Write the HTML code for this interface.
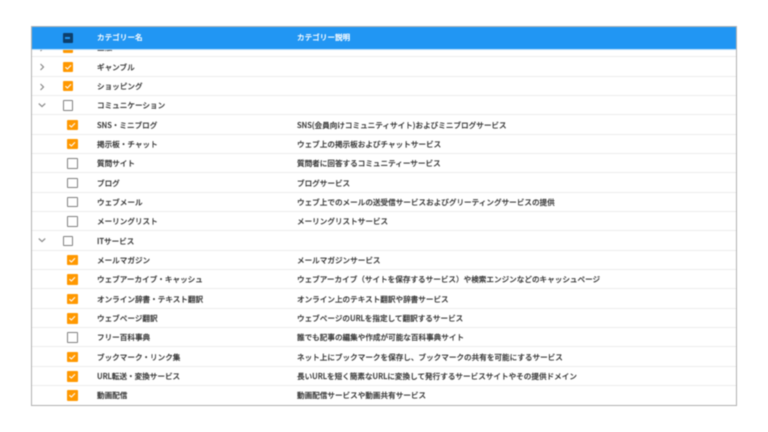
<!DOCTYPE html>
<html lang="ja"><head><meta charset="utf-8">
<style>
html,body{margin:0;padding:0;background:#fff;width:768px;height:432px;overflow:hidden}
body{font-family:"Noto Sans CJK JP","Liberation Sans",sans-serif;color:#333;font-size:7.6px;font-weight:500}
#t{position:absolute;left:31px;top:26px;width:704px;height:378px;border:1px solid #b0b0b0;overflow:hidden;background:#fff;filter:blur(.4px)}
#h{position:absolute;left:0;top:0;width:704px;height:22px;background:#2196f3;color:#fff;z-index:5;box-shadow:0 1px 0 #bbdefb}
.r{position:absolute;left:0;width:704px;height:19.35px;border-bottom:1px solid #ececec;box-sizing:border-box}
.a,.b{position:absolute;top:.4px;line-height:20px;white-space:nowrap;-webkit-text-stroke:.15px currentColor}
.a{left:65px}.b{left:265px}
.c{position:absolute;top:4.4px;width:10.4px;height:10.4px;border-radius:1px;box-sizing:border-box}
.on{background:#ff9800}
.off{border:1.3px solid #808080;background:#fff}
.c svg{position:absolute;left:0;top:0;display:block}
.p{left:30.6px}.k{left:35.3px}
.e{position:absolute;left:5px;top:5px}
</style></head><body>
<div id="t">
<div id="h">
<div class="c" style="left:30.6px;top:5.8px;background:#0d3f6b"><div style="position:absolute;left:2.7px;top:4.6px;width:5px;height:1.2px;background:#2196f3"></div></div>
<div class="a" style="top:1.2px">カテゴリー名</div>
<div class="b" style="top:1.2px">カテゴリー説明</div>
</div>
<div class="r" style="top:11px"><div class="e"><svg width="10" height="10"><path d="M3.5 2L6.5 5L3.5 8" fill="none" stroke="#888" stroke-width="1.2"/></svg></div><div class="c on p"><svg width="10" height="10"><path d="M2.4 5.2L4.4 7L8 3.2" fill="none" stroke="#fff" stroke-width="1.1"/></svg></div><div class="a">金融</div></div>
<div class="r" style="top:30.3px"><div class="e"><svg width="10" height="10"><path d="M3.5 2L6.5 5L3.5 8" fill="none" stroke="#888" stroke-width="1.2"/></svg></div><div class="c on p"><svg width="10" height="10"><path d="M2.4 5.2L4.4 7L8 3.2" fill="none" stroke="#fff" stroke-width="1.1"/></svg></div><div class="a">ギャンブル</div></div>
<div class="r" style="top:49.6px"><div class="e"><svg width="10" height="10"><path d="M3.5 2L6.5 5L3.5 8" fill="none" stroke="#888" stroke-width="1.2"/></svg></div><div class="c on p"><svg width="10" height="10"><path d="M2.4 5.2L4.4 7L8 3.2" fill="none" stroke="#fff" stroke-width="1.1"/></svg></div><div class="a">ショッピング</div></div>
<div class="r" style="top:69px"><div class="e"><svg width="10" height="10"><path d="M1.8 2.6L5 5.6L8.2 2.6" fill="none" stroke="#888" stroke-width="1.2"/></svg></div><div class="c off p"></div><div class="a">コミュニケーション</div></div>
<div class="r" style="top:88.3px"><div class="c on k"><svg width="10" height="10"><path d="M2.4 5.2L4.4 7L8 3.2" fill="none" stroke="#fff" stroke-width="1.1"/></svg></div><div class="a">SNS・ミニブログ</div><div class="b">SNS(会員向けコミュニティサイト)およびミニブログサービス</div></div>
<div class="r" style="top:107.7px"><div class="c on k"><svg width="10" height="10"><path d="M2.4 5.2L4.4 7L8 3.2" fill="none" stroke="#fff" stroke-width="1.1"/></svg></div><div class="a">掲示板・チャット</div><div class="b">ウェブ上の掲示板およびチャットサービス</div></div>
<div class="r" style="top:127px"><div class="c off k"></div><div class="a">質問サイト</div><div class="b">質問者に回答するコミュニティーサービス</div></div>
<div class="r" style="top:146.4px"><div class="c off k"></div><div class="a">ブログ</div><div class="b">ブログサービス</div></div>
<div class="r" style="top:165.7px"><div class="c off k"></div><div class="a">ウェブメール</div><div class="b">ウェブ上でのメールの送受信サービスおよびグリーティングサービスの提供</div></div>
<div class="r" style="top:185px"><div class="c off k"></div><div class="a">メーリングリスト</div><div class="b">メーリングリストサービス</div></div>
<div class="r" style="top:204.4px"><div class="e"><svg width="10" height="10"><path d="M1.8 2.6L5 5.6L8.2 2.6" fill="none" stroke="#888" stroke-width="1.2"/></svg></div><div class="c off p"></div><div class="a">ITサービス</div></div>
<div class="r" style="top:223.7px"><div class="c on k"><svg width="10" height="10"><path d="M2.4 5.2L4.4 7L8 3.2" fill="none" stroke="#fff" stroke-width="1.1"/></svg></div><div class="a">メールマガジン</div><div class="b">メールマガジンサービス</div></div>
<div class="r" style="top:243.1px"><div class="c on k"><svg width="10" height="10"><path d="M2.4 5.2L4.4 7L8 3.2" fill="none" stroke="#fff" stroke-width="1.1"/></svg></div><div class="a">ウェブアーカイブ・キャッシュ</div><div class="b">ウェブアーカイブ（サイトを保存するサービス）や検索エンジンなどのキャッシュページ</div></div>
<div class="r" style="top:262.4px"><div class="c on k"><svg width="10" height="10"><path d="M2.4 5.2L4.4 7L8 3.2" fill="none" stroke="#fff" stroke-width="1.1"/></svg></div><div class="a">オンライン辞書・テキスト翻訳</div><div class="b">オンライン上のテキスト翻訳や辞書サービス</div></div>
<div class="r" style="top:281.8px"><div class="c on k"><svg width="10" height="10"><path d="M2.4 5.2L4.4 7L8 3.2" fill="none" stroke="#fff" stroke-width="1.1"/></svg></div><div class="a">ウェブページ翻訳</div><div class="b">ウェブページのURLを指定して翻訳するサービス</div></div>
<div class="r" style="top:301.1px"><div class="c off k"></div><div class="a">フリー百科事典</div><div class="b">誰でも記事の編集や作成が可能な百科事典サイト</div></div>
<div class="r" style="top:320.4px"><div class="c on k"><svg width="10" height="10"><path d="M2.4 5.2L4.4 7L8 3.2" fill="none" stroke="#fff" stroke-width="1.1"/></svg></div><div class="a">ブックマーク・リンク集</div><div class="b">ネット上にブックマークを保存し、ブックマークの共有を可能にするサービス</div></div>
<div class="r" style="top:339.8px"><div class="c on k"><svg width="10" height="10"><path d="M2.4 5.2L4.4 7L8 3.2" fill="none" stroke="#fff" stroke-width="1.1"/></svg></div><div class="a">URL転送・変換サービス</div><div class="b">長いURLを短く簡素なURLに変換して発行するサービスサイトやその提供ドメイン</div></div>
<div class="r" style="top:359.1px;border-bottom:0"><div class="c on k"><svg width="10" height="10"><path d="M2.4 5.2L4.4 7L8 3.2" fill="none" stroke="#fff" stroke-width="1.1"/></svg></div><div class="a">動画配信</div><div class="b">動画配信サービスや動画共有サービス</div></div>
</div>
</body></html>
